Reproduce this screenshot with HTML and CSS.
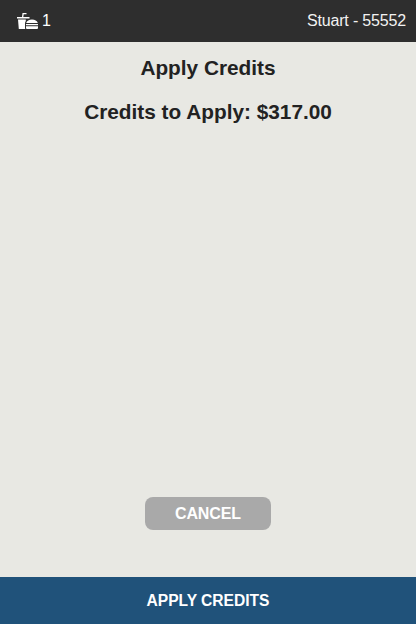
FILE: index.html
```html
<!DOCTYPE html>
<html>
<head>
<meta charset="utf-8">
<title>Apply Credits</title>
<link rel="stylesheet" href="styles.css">
</head>
<body>
<div class="app">
  <header class="topbar">
    <div class="order">
      <svg class="icon" width="21" height="17" viewBox="0 0 21 17"><path fill="#fff" d="M5.500 0h4v1.300H6.700L6.300 4H12.500v1.500H0V4H5zM1 6.500h7.800v1.600a4.500 4.500 0 0 0-.8 2.400v4.500q0 .6.300 1H1.800zM15 6.500c2.800 0 5.300 1.300 5.800 3.500H9.200c.5-2.200 3-3.500 5.800-3.500zM9 11h12v1.300H9zM9 13.300h12V15a1 1 0 0 1-1 1H10a1 1 0 0 1-1-1z"/></svg>
      <span>1</span>
    </div>
    <div class="user">Stuart - 55552</div>
  </header>
  <main class="content">
    <h1 class="title">Apply Credits</h1>
    <h2 class="subtitle">Credits to Apply: $317.00</h2>
    <button class="cancel">CANCEL</button>
  </main>
  <button class="apply">APPLY CREDITS</button>
</div>
</body>
</html>
```
FILE: styles.css
```css
html, body { margin: 0; padding: 0; height: 100%; }
body { font-family: "Liberation Sans", Arial, sans-serif; background: #e8e8e3; }
.app { display: flex; flex-direction: column; height: 624px; width: 416px; overflow: hidden; }
.topbar { flex: 0 0 42px; height: 42px; background: #2e2e2e; color: #fff; display: flex; justify-content: space-between; align-items: center; padding: 0 10px 0 17px; font-size: 16px; box-sizing: border-box; }
.order { display: flex; align-items: center; gap: 4px; }
.icon { display: block; }
.user { letter-spacing: -0.17px; color: #f2f2f2; }
.content { flex: 1; display: flex; flex-direction: column; align-items: center; color: #222; }
.title { margin: 14px 0 0; font-size: 20.8px; line-height: 24px; font-weight: bold; }
.subtitle { margin: 20px 0 0; font-size: 20.8px; line-height: 24px; font-weight: bold; }
.cancel { margin-top: auto; margin-bottom: 47px; width: 126px; height: 33px; background: #a9a9a9; color: #fff; border: 0; border-radius: 8px; font-family: inherit; font-size: 16px; font-weight: bold; padding: 0; letter-spacing: -0.1px; }
.apply { flex: 0 0 47px; height: 47px; background: #20527a; color: #fff; border: 0; font-family: inherit; font-size: 15.6px; font-weight: bold; padding: 0; }
```
